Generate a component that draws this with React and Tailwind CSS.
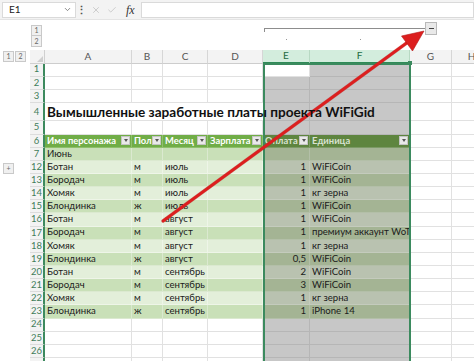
import React from 'react';
import { ChevronDown, X, Check } from 'lucide-react';

const widths = ['w-[87px]', 'w-[31px]', 'w-[45px]', 'w-[55px]', 'w-[47px]', 'w-[100px]', 'w-[42px]', 'w-[40px]'];
const letters = ['A', 'B', 'C', 'D', 'E', 'F', 'G', 'H'];
const heads = ['Имя персонажа', 'Пол', 'Месяц', 'Зарплата', 'Оплата', 'Единица'];

const data = [
    ['Ботан', 'м', 'июль', '1', 'WiFiCoin'],
    ['Бородач', 'м', 'июль', '1', 'WiFiCoin'],
    ['Хомяк', 'м', 'июль', '1', 'кг зерна'],
    ['Блондинка', 'ж', 'июль', '1', 'WiFiCoin'],
    ['Ботан', 'м', 'август', '1', 'WiFiCoin'],
    ['Бородач', 'м', 'август', '1', 'премиум аккаунт WoT'],
    ['Хомяк', 'м', 'август', '1', 'кг зерна'],
    ['Блондинка', 'ж', 'август', '0,5', 'WiFiCoin'],
    ['Ботан', 'м', 'сентябрь', '2', 'WiFiCoin'],
    ['Бородач', 'м', 'сентябрь', '3', 'WiFiCoin'],
    ['Хомяк', 'м', 'сентябрь', '1', 'кг зерна'],
    ['Блондинка', 'ж', 'сентябрь', '1', 'iPhone 14'],
];

// sheet rows, top to bottom (rows 8-11 are grouped / hidden)
const rows = [
    { n: 1 }, { n: 2 }, { n: 3 },
    { n: 4, type: 'title' },
    { n: 5 },
    { n: 6, type: 'head' },
    { n: 7, band: 'dark', cells: ['Июнь', '', '', '', '', ''] },
    ...data.map((d, i) => ({
        n: 12 + i,
        band: i % 2 === 0 ? 'light' : 'dark',
        cells: [d[0], d[1], d[2], '', d[3], d[4]],
    })),
    { n: 24 }, { n: 25 }, { n: 26 }, { n: 27, blank: true },
];

const cellBg = (row, col) => {
    const sel = col === 4 || col === 5;
    if (row.type === 'head' && col < 6) return sel ? 'bg-[#5e853f] border-[#7c9a66]' : 'bg-[#70ad47] border-[#8fc06c]';
    if (row.band && col < 6) {
        if (row.band === 'dark') return sel ? 'bg-[#a4b494] border-[#b3bfa8]' : 'bg-[#c9e0b8] border-[#dbe9d0]';
        return sel ? 'bg-[#b9c2b0] border-[#c4cbbd]' : 'bg-[#e3efda] border-[#eef5e8]';
    }
    if (sel && !(row.n === 1 && col === 4)) return 'bg-[#c7c7c7] border-[#b6b6b6]';
    return 'bg-white border-[#e1e1e1]';
};

const Dropdown = () => (
    <span className="w-[9px] h-[9px] shrink-0 bg-[#e9e9e9] border border-[#c4c4c4] flex items-center justify-center">
        <span className="w-0 h-0 border-l-[2.5px] border-r-[2.5px] border-t-[3px] border-l-transparent border-r-transparent border-t-[#555]"></span>
    </span>
);

const OutlineBtn = ({ children, className = '' }) => (
    <div className={`w-[11px] h-[11px] bg-[#f0f0f0] border border-[#c9c9c9] flex items-center justify-center text-[7px] text-[#666] leading-none ${className}`}>
        {children}
    </div>
);

const SheetRow = ({ row }) => {
    const h = row.type === 'title' ? 'h-[18.5px]' : 'h-[13.15px]';
    return (
        <div className={`flex ${h}`}>
            <div className="w-[30px] shrink-0 bg-white flex items-center pl-[3px]">
                {row.n === 12 && <OutlineBtn className="mt-[3px]">+</OutlineBtn>}
            </div>
            <div className="w-[15px] shrink-0 bg-[#f3f3f3] border-b border-[#dcdcdc] border-r-2 border-r-[#3d8a5e] flex items-center justify-center text-[9.5px] text-[#3f7d5a]">
                {row.blank ? '' : row.n}
            </div>
            {widths.map((w, c) => {
                const sel = c === 4 || c === 5;
                let content = null;
                let extra = 'border-r border-b';
                if (row.type === 'title') {
                    if (c === 0) {
                        content = (
                            <span className="relative z-10 whitespace-nowrap font-bold text-[13.6px] text-[#111] pl-[2px] pt-[2px]">
                                Вымышленные заработные платы проекта WiFiGid
                            </span>
                        );
                    }
                    if (c < 4) extra = 'border-b';
                } else if (row.type === 'head' && c < 6) {
                    content = (
                        <div className="flex items-center justify-between w-full pl-[2px] pr-[1px]">
                            <span className={`font-bold whitespace-nowrap text-[9.4px] ${sel ? 'text-[#d9e2d1]' : 'text-white'}`}>{heads[c]}</span>
                            <Dropdown />
                        </div>
                    );
                } else if (row.cells && c < 6 && row.cells[c]) {
                    content = (
                        <span className={`whitespace-nowrap text-[#1b1b1b] ${c === 4 ? 'ml-auto pr-[3px]' : 'pl-[2px]'}`}>
                            {row.cells[c]}
                        </span>
                    );
                }
                return (
                    <div key={c} className={`${w} shrink-0 flex items-center overflow-visible ${extra} ${cellBg(row, c)}`}>
                        {content}
                    </div>
                );
            })}
        </div>
    );
};

const App = () => {
    return (
        <div className="relative w-[474px] h-[361px] overflow-hidden bg-white font-['Lato','Noto_Sans',sans-serif] text-[9.6px]">
            {/* Formula bar */}
            <div className="h-[20px] bg-[#f3f3f3] flex items-center border-b border-[#e4e4e4]">
                <div className="ml-[2px] w-[74px] h-[16px] bg-white border border-[#dadada] flex items-center justify-between pl-[6px] pr-[3px] text-[10px] text-[#222]">
                    <span>E1</span>
                    <ChevronDown className="w-[9px] h-[9px] text-[#666]" strokeWidth={2} />
                </div>
                <div className="w-[11px] flex justify-center text-[11px] text-[#555] font-bold leading-none">⋮</div>
                <div className="w-[53px] h-[16px] flex items-center gap-[6px] pl-[4px]">
                    <X className="w-[10px] h-[10px] text-[#b5b5b5]" strokeWidth={1.5} />
                    <Check className="w-[10px] h-[10px] text-[#b5b5b5]" strokeWidth={1.5} />
                    <span className="ml-[3px] font-['Liberation_Serif',serif] italic text-[12px] text-[#333]">fx</span>
                </div>
                <div className="flex-1 ml-[1px] h-[16px] bg-white border border-[#dadada]"></div>
            </div>

            {/* Outline band */}
            <div className="h-[30px] flex items-start">
                <div className="w-[31px] shrink-0"></div>
                <div className="flex flex-col mt-[5px]">
                    <OutlineBtn>1</OutlineBtn>
                    <OutlineBtn className="border-t-0 h-[10px]">2</OutlineBtn>
                </div>
                <div className="w-[222px] shrink-0"></div>
                <div className="w-[161px] shrink-0 flex flex-col mt-[8px]">
                    <div className="h-[4px] border-t border-l border-[#8d8d8d]"></div>
                    <div className="flex mt-[7px]">
                        <span className="ml-[22px] w-[1px] h-[1px] bg-[#999]"></span>
                        <span className="ml-[73px] w-[1px] h-[1px] bg-[#999]"></span>
                    </div>
                </div>
                <div className="mt-[2px] w-[12px] h-[13px] bg-[#e9e9e9] border border-[#b9b9b9] flex items-center justify-center">
                    <span className="w-[5px] h-[1.5px] bg-[#444]"></span>
                </div>
            </div>

            {/* Column headers */}
            <div className="flex h-[13.5px]">
                <div className="w-[30px] shrink-0 flex items-center gap-[1px] pl-[3px]">
                    <OutlineBtn className="h-[9px] w-[10px]">1</OutlineBtn>
                    <OutlineBtn className="h-[9px] w-[10px]">2</OutlineBtn>
                </div>
                <div className="w-[15px] shrink-0 bg-[#f3f3f3] border-b border-r border-[#d0d0d0] flex items-end justify-end p-[1px]">
                    <span className="w-0 h-0 border-l-[6px] border-b-[6px] border-l-transparent border-b-[#cfcfcf]"></span>
                </div>
                {widths.map((w, c) => {
                    const sel = c === 4 || c === 5;
                    return (
                        <div
                            key={c}
                            className={`${w} shrink-0 flex items-center justify-center text-[10px] border-r ${sel ? 'bg-[#d3eddd] text-[#1e6b41] border-[#b7d9c3] border-b-2 border-b-[#2f8a57]' : 'bg-[#f3f3f3] text-[#555] border-[#d6d6d6] border-b border-b-[#cdcdcd]'}`}
                        >
                            {letters[c]}
                        </div>
                    );
                })}
            </div>

            {/* Grid */}
            {rows.map((r) => (
                <SheetRow key={r.n} row={r} />
            ))}

            {/* Selection outline E1:F */}
            <div className="absolute left-[263px] top-[63px] w-[148px] h-[300px] border-2 border-[#3b8a5e] pointer-events-none"></div>
            <div className="absolute left-[408px] top-[61px] w-[4px] h-[4px] bg-[#3b8a5e]"></div>

            {/* Red arrow */}
            <svg className="absolute inset-0 pointer-events-none" width="474" height="361" viewBox="0 0 474 361">
                <line x1="163" y1="221" x2="408" y2="42" stroke="#a01414" strokeWidth="3.6" strokeLinecap="round" opacity="0.35" />
                <line x1="163" y1="221" x2="408" y2="42" stroke="#dc1f1f" strokeWidth="2.8" strokeLinecap="round" />
                <polygon points="424,31 401.5,36 412.5,51" fill="#dc1f1f" stroke="#b51818" strokeWidth="0.6" />
            </svg>
        </div>
    );
};

export default App;
